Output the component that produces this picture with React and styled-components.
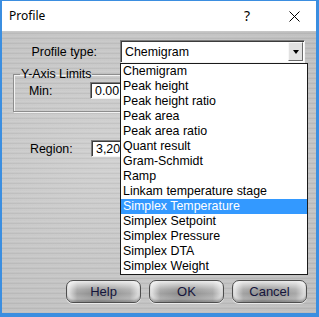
import React from 'react';
import styled, { createGlobalStyle } from 'styled-components';

const Global = createGlobalStyle`
  html, body { margin: 0; padding: 0; }
  body {
    width: 319px;
    height: 317px;
    overflow: hidden;
    font-family: "Liberation Sans", Arial, sans-serif;
  }
`;

const Window = styled.div`
  box-sizing: border-box;
  width: 319px;
  height: 317px;
  border-style: solid;
  border-color: #3b8ee0;
  border-width: 1px 3px 4px 2px;
  display: flex;
  flex-direction: column;
  background: #fff;
`;

const TitleBar = styled.div`
  height: 30px;
  flex: none;
  display: flex;
  align-items: center;
  padding-left: 7px;
  background: #fff;
  font-family: "Noto Sans", sans-serif;
  font-size: 12px;
  color: #000;
`;

const Title = styled.span`
  flex: 1;
  margin-top: -1px;
`;

const Help = styled.span`
  font-size: 14px;
  width: 12px;
  margin-right: 33px;
  margin-top: -1px;
`;

const CloseBox = styled.span`
  display: flex;
  width: 12px;
  margin-right: 15px;
`;

const Body = styled.div`
  position: relative;
  flex: 1;
  display: flex;
  flex-direction: column;
  padding-top: 9px;
  background:
    repeating-linear-gradient(180deg,
      rgba(255,255,255,0.10) 0px, rgba(255,255,255,0.10) 1px,
      rgba(0,0,0,0.00) 1px, rgba(0,0,0,0.00) 2px,
      rgba(0,0,0,0.045) 2px, rgba(0,0,0,0.045) 3px,
      rgba(255,255,255,0.05) 3px, rgba(255,255,255,0.05) 5px),
    radial-gradient(ellipse at 35% 45%, #d0d0d0 0%, #c4c4c4 55%, #bbbbbb 100%);
  font-size: 12.4px;
  color: #000;
`;

const TopRow = styled.div`
  display: flex;
  align-items: center;
  height: 23px;
`;

const RightLabel = styled.span`
  width: 95px;
  text-align: right;
  margin-right: 23px;
`;

const Combo = styled.div`
  box-sizing: border-box;
  width: 185px;
  height: 23px;
  display: flex;
  align-items: center;
  background: #fff;
  border: 1px solid;
  border-color: #7c7c7c #f4f4f4 #f4f4f4 #7c7c7c;
  box-shadow: inset 1px 1px 0 #3c3c3c;
  padding-left: 4px;
`;

const ComboText = styled.span`
  flex: 1;
`;

const ComboButton = styled.span`
  box-sizing: border-box;
  width: 15px;
  height: 19px;
  margin-right: 1px;
  display: flex;
  align-items: center;
  justify-content: center;
  background: #e2e2e2;
  border: 1px solid;
  border-color: #f8f8f8 #6a6a6a #6a6a6a #f8f8f8;
`;

const Arrow = styled.span`
  width: 0;
  height: 0;
  border-left: 3.5px solid transparent;
  border-right: 3.5px solid transparent;
  border-top: 4px solid #000;
  margin-top: 1px;
`;

const GroupBox = styled.fieldset`
  box-sizing: border-box;
  margin: 4px 0 0 11px;
  width: 290px;
  height: 45px;
  padding: 0 0 0 6px;
  border: 1px solid #8d8d8d;
  box-shadow: 1px 1px 0 #f2f2f2, inset 1px 1px 0 #f2f2f2;
  min-width: 0;
`;

const Legend = styled.legend`
  padding: 0 1px;
  line-height: 14px;
`;

const FieldRow = styled.div`
  display: flex;
  align-items: center;
  margin: ${p => p.$top}px 0 0 ${p => p.$left}px;
`;

const FieldLabel = styled.span`
  width: 61px;
`;

const Input = styled.div`
  box-sizing: border-box;
  width: 110px;
  height: 17px;
  display: flex;
  align-items: center;
  padding-left: 4px;
  background: #fff;
  border: 1px solid;
  border-color: #7c7c7c #f4f4f4 #f4f4f4 #7c7c7c;
  box-shadow: inset 1px 1px 0 #3c3c3c;
`;

const Buttons = styled.div`
  margin-top: auto;
  margin-bottom: 10px;
  padding-right: 9px;
  display: flex;
  justify-content: flex-end;
  gap: 8px;
`;

const MetalButton = styled.button`
  box-sizing: border-box;
  width: 75px;
  height: 23px;
  padding: 0;
  font-family: "Liberation Sans", Arial, sans-serif;
  font-size: 13px;
  color: #15153c;
  border: 1px solid #4e4e4e;
  border-radius: 7px;
  background:
    linear-gradient(180deg, rgba(255,255,255,0.8) 0%, rgba(255,255,255,0.15) 40%, rgba(255,255,255,0) 60%, rgba(255,255,255,0.3) 100%),
    linear-gradient(90deg, #ececec 0%, #a2a2a2 14%, #8c8c8c 40%, #989898 65%, #a8a8a8 86%, #e4e4e4 100%);
  box-shadow: inset 0 -2px 2px rgba(0,0,0,0.25), 0 1px 0 rgba(255,255,255,0.7);
  display: flex;
  align-items: center;
  justify-content: center;
`;

const List = styled.div`
  position: absolute;
  left: 118px;
  top: 32px;
  box-sizing: border-box;
  width: 188px;
  height: 212px;
  background: #fff;
  border: 1px solid #1a1a1a;
  display: flex;
  flex-direction: column;
`;

const Item = styled.div`
  height: 15px;
  line-height: 15px;
  padding-left: 2px;
  white-space: nowrap;
  background: ${p => (p.$selected ? '#3399ff' : 'transparent')};
  color: ${p => (p.$selected ? '#fff' : '#000')};
`;

const items = [
  'Chemigram',
  'Peak height',
  'Peak height ratio',
  'Peak area',
  'Peak area ratio',
  'Quant result',
  'Gram-Schmidt',
  'Ramp',
  'Linkam temperature stage',
  'Simplex Temperature',
  'Simplex Setpoint',
  'Simplex Pressure',
  'Simplex DTA',
  'Simplex Weight',
];

export default function App() {
  return (
    <>
      <Global />
      <Window>
        <TitleBar>
          <Title>Profile</Title>
          <Help>?</Help>
          <CloseBox>
            <svg width="11" height="11" viewBox="0 0 11 11">
              <path d="M0.5 0.5 L10.5 10.5 M10.5 0.5 L0.5 10.5" stroke="#000" strokeWidth="1" fill="none" />
            </svg>
          </CloseBox>
        </TitleBar>
        <Body>
          <TopRow>
            <RightLabel>Profile type:</RightLabel>
            <Combo>
              <ComboText>Chemigram</ComboText>
              <ComboButton><Arrow /></ComboButton>
            </Combo>
          </TopRow>
          <GroupBox>
            <Legend>Y-Axis Limits</Legend>
            <FieldRow $top={1} $left={9}>
              <FieldLabel>Min:</FieldLabel>
              <Input>0.00</Input>
            </FieldRow>
          </GroupBox>
          <FieldRow $top={28} $left={28}>
            <FieldLabel>Region:</FieldLabel>
            <Input>3,20</Input>
          </FieldRow>
          <Buttons>
            <MetalButton>Help</MetalButton>
            <MetalButton>OK</MetalButton>
            <MetalButton>Cancel</MetalButton>
          </Buttons>
          <List>
            {items.map(t => (
              <Item key={t} $selected={t === 'Simplex Temperature'}>{t}</Item>
            ))}
          </List>
        </Body>
      </Window>
    </>
  );
}
